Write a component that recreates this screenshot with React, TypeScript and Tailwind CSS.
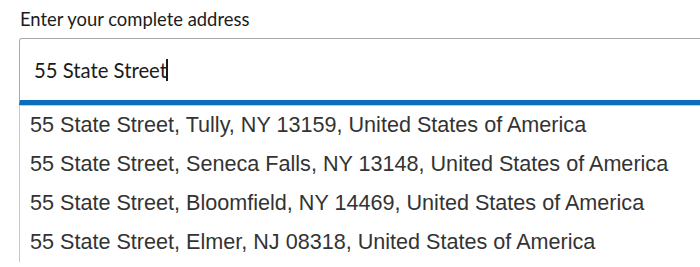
import React from "react";

const items = [
  "55 State Street, Tully, NY 13159, United States of America",
  "55 State Street, Seneca Falls, NY 13148, United States of America",
  "55 State Street, Bloomfield, NY 14469, United States of America",
  "55 State Street, Elmer, NJ 08318, United States of America",
];

export default function App() {
  return (
    <div className="w-[700px] h-[267px] overflow-hidden bg-white">
      <div className="pl-[19px] pt-[7px] w-[740px]">
        <label
          className="block text-[18.4px] leading-[24px] text-[#1b1b1b] ml-[1px]"
          style={{ fontFamily: "Lato, 'Open Sans', sans-serif" }}
        >
          Enter your complete address
        </label>
        <div className="mt-[7px] h-[67px] border border-[#a9a9b0] border-b-[5px] border-b-[#0b6dbb] rounded-tl-[3px] flex items-center pl-[14px]">
          <span
            className="text-[20.3px] text-[#1b1b1b] leading-[24px] flex items-center"
            style={{ fontFamily: "Lato, 'Open Sans', sans-serif" }}
          >
            55 State Street
            <span className="inline-block w-[2px] h-[22px] bg-[#1b1b1b] ml-[-1px]"></span>
          </span>
        </div>
        <ul
          className="border-l border-t border-[#c8c8c8] pl-[10px]"
          style={{ fontFamily: "'Liberation Sans', Arial, sans-serif" }}
        >
          {items.map((t) => (
            <li key={t} className="h-[39px] flex items-center text-[21.6px] text-[#333333] whitespace-nowrap">
              {t}
            </li>
          ))}
        </ul>
      </div>
    </div>
  );
}
